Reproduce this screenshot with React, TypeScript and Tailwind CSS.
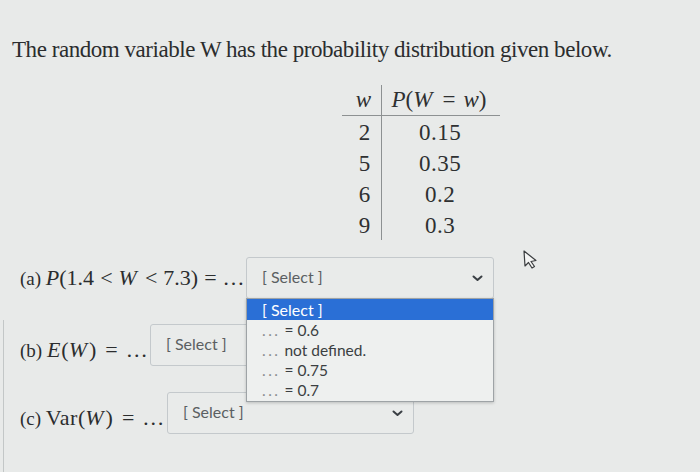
import React from "react";

const serif = { fontFamily: '"Liberation Serif", "Times New Roman", serif' };
const lato = { fontFamily: 'Lato, "Open Sans", sans-serif' };

function Chevron() {
  return (
    <svg width="11" height="7" viewBox="0 0 11 7" className="shrink-0">
      <path d="M1.5 1.5 L5.5 5 L9.5 1.5" fill="none" stroke="#3a3f44" strokeWidth="2" strokeLinecap="round" strokeLinejoin="round" />
    </svg>
  );
}

function SelectBox({ width }: { width: string }) {
  return (
    <div
      className={`${width} shrink-0 h-[42px] border border-[#c4c9cc] rounded-[3px] bg-[#e9ebea] flex items-center justify-between pl-[15px] pr-[10px] text-[16px] text-[#5b5f62]`}
      style={lato}
    >
      <span className="-mt-[2px]">[ Select ]</span>
      <Chevron />
    </div>
  );
}

function M({ children }: { children: React.ReactNode }) {
  return <span className="italic">{children}</span>;
}

function W() {
  return <span className="italic pr-[2px]">W</span>;
}

function Rel({ children }: { children: React.ReactNode }) {
  return <span className="mx-[6px]">{children}</span>;
}

function WideRel({ children }: { children: React.ReactNode }) {
  return <span className="ml-[9px] mr-[8px]">{children}</span>;
}

function TRel({ children }: { children: React.ReactNode }) {
  return <span className="mx-[8px]">{children}</span>;
}

export default function App() {
  return (
    <div className="w-[700px] h-[472px] bg-[#e8eae9] relative overflow-hidden text-[#2b2d2e]" style={serif}>
      <div className="absolute left-[3px] top-[320px] bottom-0 w-px bg-[#c3c7c7]" />
      <div className="pt-[36px] pl-[12px] text-[23px] leading-[28px] tracking-[-0.45px] whitespace-nowrap">
        The random variable W has the probability distribution given below.
      </div>

      <div className="ml-[342px] mt-[21px] w-[158px] text-[23px] leading-[28px] text-[#2e3031]">
        <div className="grid grid-cols-[39px_119px]">
          <div className="h-[31px] border-b border-[#8d9192] flex items-center justify-center pl-[4px]"><M>w</M></div>
          <div className="h-[31px] border-b border-l border-[#8d9192] flex items-center justify-center pr-[4px] whitespace-nowrap">
            <M>P</M>(<W /><TRel>=</TRel><M>w</M>)
          </div>
          {[["2", "0.15"], ["5", "0.35"], ["6", "0.2"], ["9", "0.3"]].map(([a, b]) => (
            <React.Fragment key={a}>
              <div className="h-[31px] flex items-center justify-center pl-[6px] pt-[2px]">{a}</div>
              <div className="h-[31px] border-l border-[#8d9192] flex items-center justify-center pr-[2px] pt-[2px] tracking-[0.5px]">{b}</div>
            </React.Fragment>
          ))}
        </div>
      </div>

      <div className="pl-[20px] mt-[17px] text-[19px]">
        <div className="flex items-center relative">
          <div className="w-[226px] mt-[-2px] whitespace-nowrap">
            (a) <span className="text-[22px]"><M>P</M>(1.4<Rel>&lt;</Rel><W /><Rel>&lt;</Rel>7.3)<Rel>=</Rel>…</span>
          </div>
          <SelectBox width="w-[248px]" />
          <div
            className="absolute left-[226px] top-[41px] w-[248px] h-[104px] border border-[#9ea3a6] bg-[#eef0ef] shadow-[0_1px_3px_rgba(0,0,0,0.2)] z-10 text-[15.5px] text-[#3b3f42]"
            style={lato}
          >
            <div className="h-[21px] bg-[#2a6fd6] text-white text-[16px] leading-[21px] pl-[15px]">[ Select ]</div>
            {["= 0.6", "not defined.", "= 0.75", "= 0.7"].map((t) => (
              <div key={t} className="h-[20px] leading-[20px] pl-[15px] whitespace-nowrap">
                <span className="text-[#8a8e91] tracking-[2.5px]">...</span> {t}
              </div>
            ))}
          </div>
        </div>

        <div className="flex items-center mt-[24px]">
          <div className="w-[130px] mt-[10px] whitespace-nowrap">
            (b) <span className="text-[22px]"><span className="italic pr-[1px]">E</span>(<W />)<WideRel>=</WideRel><span className="tracking-[1px]">…</span></span>
          </div>
          <SelectBox width="w-[248px]" />
        </div>

        <div className="flex items-center mt-[26px]">
          <div className="w-[147px] mt-[8px] whitespace-nowrap">
            (c) <span className="text-[22px]"><span className="tracking-[0.5px]">Var</span>(<W />)<WideRel>=</WideRel><span className="tracking-[1px]">…</span></span>
          </div>
          <SelectBox width="w-[247px]" />
        </div>
      </div>

      <svg className="absolute left-[521px] top-[249px]" width="20" height="22" viewBox="0 0 20 22">
        <path d="M3 2 L4 17 L7.5 13.5 L11 19 L13.5 17.5 L10 12.5 L15 11.5 Z" fill="#f4f5f4" stroke="#3a3d3f" strokeWidth="1.2" strokeLinejoin="round" />
      </svg>
    </div>
  );
}
